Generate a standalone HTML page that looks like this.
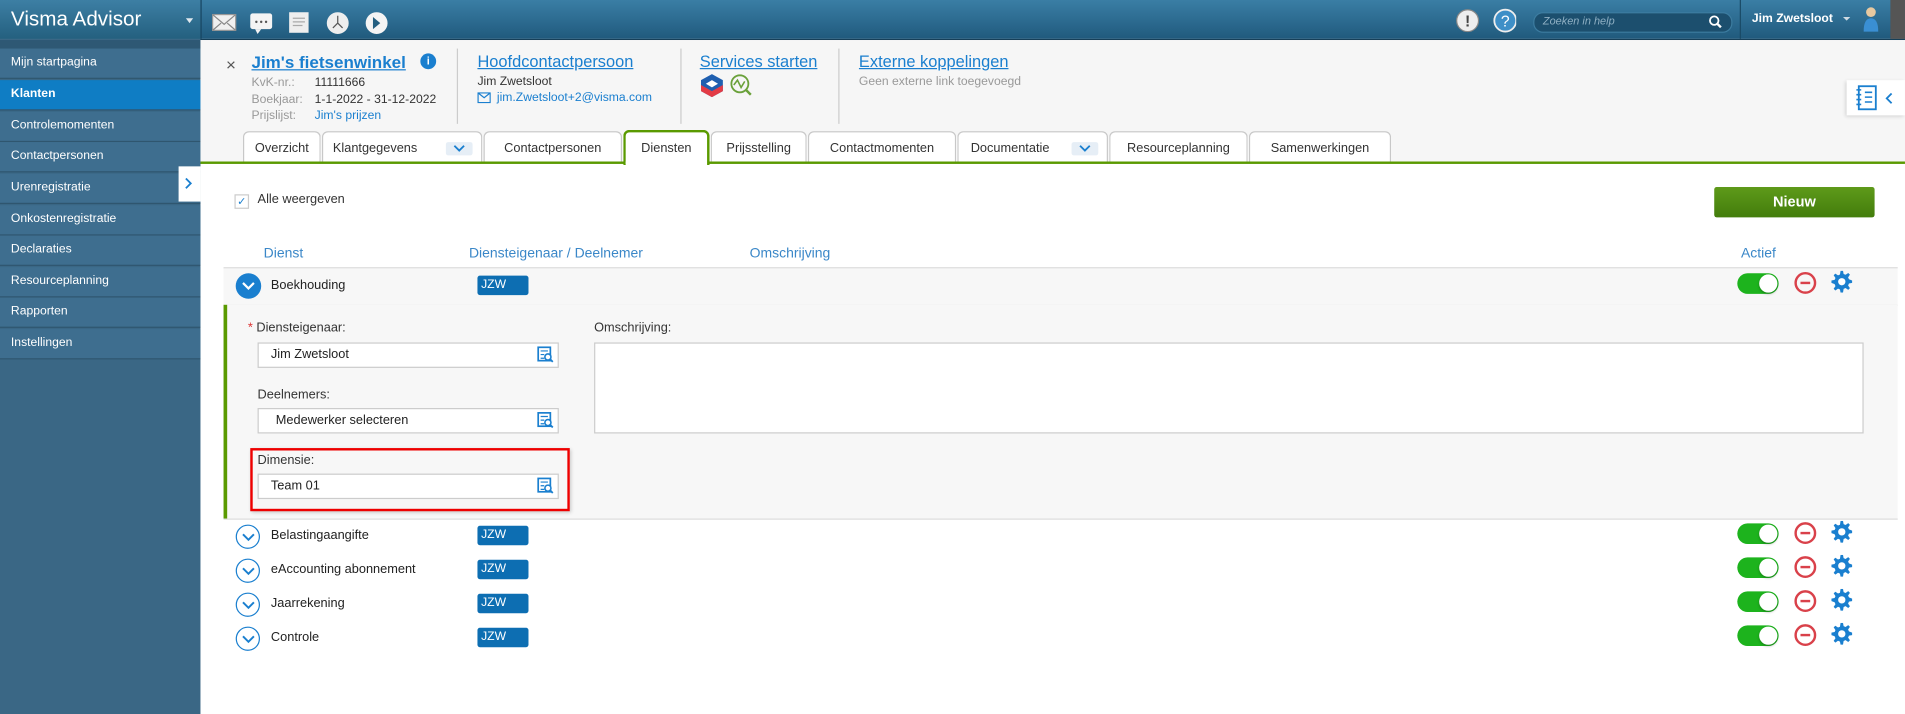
<!DOCTYPE html>
<html><head><meta charset="utf-8">
<style>
html,body{margin:0;padding:0;width:1905px;height:714px;overflow:hidden;background:#fff}
#s{position:absolute;left:0;top:0;width:1568px;height:588px;transform:scale(1.2149,1.2143);transform-origin:0 0;font-family:"Liberation Sans",sans-serif;font-size:11px;color:#222;background:#fff}
.a{position:absolute}
.top{left:0;top:0;width:1568px;height:32px;background:linear-gradient(#3a7ea5,#205a7d);border-bottom:1px solid #163f58}
.side{left:0;top:32px;width:165px;height:556px;background:#3a6785}
.nav{left:0;width:165px;height:24px;background:#3e6e8f;border-bottom:1px solid #2f566f;color:#fff;font-size:10px;line-height:24px;text-indent:9px}
.hdr{left:165px;top:33px;width:1403px;height:101px;background:#f6f6f6}
.lnk{color:#1a7fcf;text-decoration:underline}
.g{color:#999}
.sep{width:1px;background:#ccc}
.tab{top:108px;height:25px;border:1px solid #c8c8c8;border-bottom:none;border-radius:5px 5px 0 0;background:#fff;line-height:26px;text-align:center;font-size:10.5px;color:#333}
.col{top:203px;color:#3a87c8;font-size:11.5px}
.badge{width:42px;height:16px;background:#0d6eb2;border-radius:2px;color:#fff;font-size:10px;line-height:16px;text-indent:3px}
.tog{width:34px;height:17px;background:#1db31d;border-radius:9px}
.tog:after{content:"";position:absolute;right:1px;top:1px;width:15px;height:15px;border-radius:50%;background:#fff;box-shadow:0 1px 2px rgba(0,0,0,.3)}
.min{width:14px;height:14px;border:2px solid #d9414a;border-radius:50%}
.min:after{content:"";position:absolute;left:3px;top:6px;width:8px;height:2px;background:#d9414a}
.inp{width:246px;height:19px;border:1px solid #ccc;background:#fff;line-height:19px;text-indent:10px;font-size:10.5px}
.lbl{font-size:10.5px;color:#333}
.chev{width:18px;height:18px;border:1.5px solid #1a7fcf;border-radius:50%}
.txt{font-size:10.5px}
</style></head><body><div id="s">
<svg width="0" height="0" style="position:absolute"><defs><g id="gear"><path d="M9 0h2l.5 2.6 1.6.7 2.2-1.5 1.4 1.4-1.5 2.2.7 1.6L18.5 8v2l-2.6.5-.7 1.6 1.5 2.2-1.4 1.4-2.2-1.5-1.6.7L11 18h-2l-.5-2.6-1.6-.7-2.2 1.5-1.4-1.4 1.5-2.2-.7-1.6L1.5 10V8l2.6-.5.7-1.6-1.5-2.2 1.4-1.4 2.2 1.5 1.6-.7z" fill="#1a7fcf" transform="translate(-1 0)"/><circle cx="9" cy="9" r="3" fill="#fff"/></g></defs></svg>
<div class="a top"></div>
<div class="a" style="left:0;top:0;width:165px;height:32px;background:linear-gradient(#3d7fa4,#24607f);border-right:1px solid #174561"></div>
<div class="a" style="left:9px;top:6px;color:#fff;font-size:17px">Visma Advisor</div>
<div class="a" style="left:153px;top:15px;border:3px solid transparent;border-top:4px solid #dfe8ee"></div>
<svg class="a" style="left:174px;top:10px" width="150" height="20">
<rect x="1" y="2" width="19" height="13" fill="#f0f0f0" stroke="#999"/><path d="M1 2l9.5 8 9.5-8M1 15l7-6M20 15l-7-6" fill="none" stroke="#888"/>
<rect x="32" y="1" width="18" height="13" rx="2" fill="#f4f4f4"/><path d="M36 14l2 4 3-4z" fill="#f4f4f4"/><circle cx="37" cy="8" r="1" fill="#555"/><circle cx="41" cy="8" r="1" fill="#555"/><circle cx="45" cy="8" r="1" fill="#555"/>
<rect x="64" y="0" width="16" height="17" fill="#eee"/><path d="M67 5h10M67 8h10M67 11h8" stroke="#aaa"/>
<circle cx="104" cy="9" r="9" fill="#eee"/><path d="M104 3v6l4 4M104 9l-4 4" stroke="#555" fill="none"/>
<circle cx="136" cy="9" r="9" fill="#f4f4f4"/><path d="M133 4l6 5-6 5z" fill="#245f80"/>
</svg>
<svg class="a" style="left:1198px;top:7px" width="50" height="20"><circle cx="10" cy="10" r="9" fill="#eee" stroke="#888"/><text x="10" y="15" font-size="13" text-anchor="middle" fill="#444" font-family="Liberation Sans" font-weight="bold">!</text><circle cx="41" cy="10" r="9" fill="#3e8fc7" stroke="#eee" stroke-width="1.5"/><text x="41" y="15" font-size="13" text-anchor="middle" fill="#fff" font-family="Liberation Sans">?</text></svg>
<div class="a" style="left:1262px;top:10px;width:162px;height:15px;border-radius:8px;background:#1c4f6e;border:1px solid #3c7ca0"></div>
<div class="a" style="left:1270px;top:12px;color:#8fb0c4;font-size:9px;font-style:italic">Zoeken in help</div>
<svg class="a" style="left:1406px;top:12px" width="12" height="12"><circle cx="5" cy="5" r="3.5" stroke="#fff" stroke-width="1.5" fill="none"/><path d="M7.5 7.5l3 3" stroke="#fff" stroke-width="2"/></svg>
<div class="a" style="left:1432px;top:0;width:1px;height:32px;background:#1a4a66"></div>
<div class="a" style="left:1442px;top:10px;color:#fff;font-weight:bold;font-size:10px">Jim Zwetsloot</div>
<div class="a" style="left:1517px;top:14px;border:3px solid transparent;border-top:3px solid #cfdbe3"></div>
<svg class="a" style="left:1532px;top:4px" width="16" height="24"><circle cx="8" cy="6" r="4" fill="#e8c9a0"/><path d="M2 22q0-11 6-11t6 11z" fill="#3a8fd3"/></svg>
<div class="a" style="left:1556px;top:0;width:12px;height:32px;background:#555"></div>

<div class="a side"></div>
<div class="a" style="left:0;top:33px;width:165px;height:7px;background:#2e5874"></div>
<div class="a nav" style="top:40px">Mijn startpagina</div>
<div class="a nav" style="top:66px;background:#0f7dc4;font-weight:bold">Klanten</div>
<div class="a nav" style="top:92px">Controlemomenten</div>
<div class="a nav" style="top:117px">Contactpersonen</div>
<div class="a nav" style="top:143px">Urenregistratie</div>
<div class="a nav" style="top:169px">Onkostenregistratie</div>
<div class="a nav" style="top:194px">Declaraties</div>
<div class="a nav" style="top:220px">Resourceplanning</div>
<div class="a nav" style="top:245px">Rapporten</div>
<div class="a nav" style="top:271px">Instellingen</div>

<div class="a hdr"></div>
<div class="a" style="left:186px;top:45px;font-size:14px;color:#555">×</div>
<div class="a lnk" style="left:207px;top:43px;font-size:14px;font-weight:bold">Jim's fietsenwinkel</div>
<div class="a" style="left:346px;top:44px;width:13px;height:13px;border-radius:50%;background:#1a7fcf;color:#fff;font-size:9px;font-weight:bold;text-align:center;line-height:13px">i</div>
<div class="a g" style="left:207px;top:62px;font-size:10px;line-height:13.5px">KvK-nr.:<br>Boekjaar:<br>Prijslijst:</div>
<div class="a" style="left:259px;top:62px;font-size:10px;line-height:13.5px;color:#333">11111666<br>1-1-2022 - 31-12-2022<br><span style="color:#1a7fcf">Jim's prijzen</span></div>
<div class="a sep" style="left:376px;top:40px;height:62px"></div>
<div class="a lnk" style="left:393px;top:43px;font-size:13.5px">Hoofdcontactpersoon</div>
<div class="a" style="left:393px;top:62px;font-size:10px;color:#333">Jim Zwetsloot</div>
<svg class="a" style="left:393px;top:76px" width="11" height="9"><rect x=".5" y=".5" width="10" height="8" fill="none" stroke="#1a7fcf"/><path d="M.5 .5l5 4 5-4" fill="none" stroke="#1a7fcf"/></svg>
<div class="a" style="left:409px;top:75px;font-size:10px;color:#1a7fcf">jim.Zwetsloot+2@visma.com</div>
<div class="a sep" style="left:560px;top:40px;height:62px"></div>
<div class="a lnk" style="left:576px;top:43px;font-size:13.5px">Services starten</div>
<svg class="a" style="left:576px;top:60px" width="48" height="20"><path d="M10 1l9 5v9l-9 5-9-5V6z" fill="#1f5fb0"/><path d="M1 10l9 5 9-5v5l-9 5-9-5z" fill="#e33b45"/><path d="M10 6l5 3-5 3-5-3z" fill="#fff"/><circle cx="33" cy="9" r="7" fill="none" stroke="#6aa13a" stroke-width="1.5"/><path d="M28 10l3-4 3 6 3-5" fill="none" stroke="#6aa13a" stroke-width="1.3"/><path d="M38 14l4 4" stroke="#6aa13a" stroke-width="2"/></svg>
<div class="a sep" style="left:690px;top:40px;height:62px"></div>
<div class="a lnk" style="left:707px;top:43px;font-size:13.5px">Externe koppelingen</div>
<div class="a g" style="left:707px;top:62px;font-size:10px">Geen externe link toegevoegd</div>
<div class="a" style="left:1520px;top:66px;width:48px;height:29px;background:#fff;box-shadow:-1px 1px 3px rgba(0,0,0,.15)"></div>
<svg class="a" style="left:1527px;top:70px" width="38" height="22"><rect x="3" y="1" width="14" height="19" fill="none" stroke="#1a7fcf" stroke-width="1.5"/><path d="M1 4h4M1 8h4M1 12h4M1 16h4M8 6h6M8 10h6M8 14h6" stroke="#1a7fcf" stroke-width="1.3"/><path d="M30 7l-4 4 4 4" fill="none" stroke="#1a7fcf" stroke-width="1.5"/></svg>

<div class="a tab" style="left:200px;width:62px">Overzicht</div>
<div class="a tab" style="left:265px;width:130px;text-align:left;text-indent:8px">Klantgegevens</div>
<div class="a" style="left:367px;top:117px;width:22px;height:11px;background:#e6eef6;border-radius:2px"></div>
<svg class="a" style="left:373px;top:119px" width="10" height="7"><path d="M1 1l4 4 4-4" fill="none" stroke="#1a7fcf" stroke-width="1.5"/></svg>
<div class="a tab" style="left:398px;width:112px">Contactpersonen</div>
<div class="a tab" style="left:513px;width:67px;border:2px solid #5a9a00;border-bottom:none;height:27px;top:107px;z-index:2">Diensten</div>
<div class="a tab" style="left:585px;width:77px">Prijsstelling</div>
<div class="a tab" style="left:665px;width:120px">Contactmomenten</div>
<div class="a tab" style="left:788px;width:122px;text-align:left;text-indent:10px">Documentatie</div>
<div class="a" style="left:882px;top:117px;width:22px;height:11px;background:#e6eef6;border-radius:2px"></div>
<svg class="a" style="left:888px;top:119px" width="10" height="7"><path d="M1 1l4 4 4-4" fill="none" stroke="#1a7fcf" stroke-width="1.5"/></svg>
<div class="a tab" style="left:913px;width:112px">Resourceplanning</div>
<div class="a tab" style="left:1028px;width:115px">Samenwerkingen</div>
<div class="a" style="left:165px;top:133px;width:1403px;height:2px;background:#5a9a00"></div>
<div class="a" style="left:515px;top:133px;width:65px;height:2px;background:#fff;z-index:3"></div>

<div class="a" style="left:147px;top:137px;width:18px;height:29px;background:#fff"></div>
<svg class="a" style="left:151px;top:146px" width="8" height="10"><path d="M2 1l4 4-4 4" fill="none" stroke="#1a7fcf" stroke-width="1.5"/></svg>

<div class="a" style="left:193px;top:160px;width:10px;height:10px;border:1px solid #ccc;background:#fff;color:#1a7fcf;font-size:9px;line-height:10px;text-align:center">✓</div>
<div class="a" style="left:212px;top:158px;font-size:10.5px;color:#333">Alle weergeven</div>
<div class="a" style="left:1411px;top:154px;width:132px;height:25px;background:linear-gradient(#5e9a1a,#437d0c);border-radius:2px;color:#fff;font-size:12px;text-align:center;line-height:25px;font-weight:bold">Nieuw</div>

<div class="a col" style="left:217px">Dienst</div>
<div class="a col" style="left:386px">Diensteigenaar / Deelnemer</div>
<div class="a col" style="left:617px">Omschrijving</div>
<div class="a col" style="left:1433px">Actief</div>

<div class="a" style="left:184px;top:220px;width:1378px;height:30px;background:#f7f7f7;border-top:1px solid #ddd;border-bottom:1px solid #ddd"></div>
<div class="a" style="left:194px;top:225px;width:21px;height:21px;border-radius:50%;background:#1a7fcf"></div>
<svg class="a" style="left:199px;top:232px" width="11" height="8"><path d="M1 1l4.5 4.5L10 1" fill="none" stroke="#fff" stroke-width="1.8"/></svg>
<div class="a txt" style="left:223px;top:229px">Boekhouding</div>
<div class="a badge" style="left:393px;top:227px">JZW</div>
<div class="a tog" style="left:1430px;top:225px"></div>
<div class="a min" style="left:1477px;top:224px"></div>
<svg class="a" style="left:1507px;top:223px" width="18" height="18"><use href="#gear"/></svg>

<div class="a" style="left:184px;top:251px;width:1378px;height:176px;background:#f7f7f7;border-bottom:1px solid #ddd"></div>
<div class="a" style="left:184px;top:251px;width:3px;height:176px;background:#5a9a00"></div>
<div class="a lbl" style="left:204px;top:264px"><span style="color:#d33">*</span> Diensteigenaar:</div>
<div class="a inp" style="left:212px;top:282px">Jim Zwetsloot</div>
<div class="a lbl" style="left:212px;top:319px">Deelnemers:</div>
<div class="a inp" style="left:212px;top:336px;text-indent:14px">Medewerker selecteren</div>
<div class="a" style="left:206px;top:369px;width:259px;height:48px;border:2px solid #e00;box-shadow:1px 1px 3px rgba(0,0,0,.2)"></div>
<div class="a lbl" style="left:212px;top:373px">Dimensie:</div>
<div class="a inp" style="left:212px;top:390px">Team 01</div>
<svg class="a" style="left:442px;top:285px" width="14" height="130"><g id="ic"><rect x="1" y="1" width="10" height="11" fill="none" stroke="#1a7fcf" stroke-width="1.4"/><path d="M3 4h6M3 7h3M3 10h3" stroke="#1a7fcf"/><circle cx="9" cy="9" r="2.5" fill="#fff" stroke="#1a7fcf" stroke-width="1.3"/><path d="M11 11l2 2" stroke="#1a7fcf" stroke-width="1.5"/></g><use href="#ic" y="54"/><use href="#ic" y="108"/></svg>
<div class="a lbl" style="left:489px;top:264px">Omschrijving:</div>
<div class="a" style="left:489px;top:282px;width:1043px;height:73px;border:1px solid #ccc;background:#fff"></div>

<div class="a chev" style="left:194px;top:432px"></div><svg class="a" style="left:199px;top:439px" width="11" height="8"><path d="M1 1l4.5 4.5L10 1" fill="none" stroke="#1a7fcf" stroke-width="1.6"/></svg>
<div class="a txt" style="left:223px;top:435px">Belastingaangifte</div><div class="a badge" style="left:393px;top:433px">JZW</div>
<div class="a tog" style="left:1430px;top:431px"></div><div class="a min" style="left:1477px;top:430px"></div><svg class="a" style="left:1507px;top:429px" width="18" height="18"><use href="#gear"/></svg>

<div class="a chev" style="left:194px;top:460px"></div><svg class="a" style="left:199px;top:467px" width="11" height="8"><path d="M1 1l4.5 4.5L10 1" fill="none" stroke="#1a7fcf" stroke-width="1.6"/></svg>
<div class="a txt" style="left:223px;top:463px">eAccounting abonnement</div><div class="a badge" style="left:393px;top:461px">JZW</div>
<div class="a tog" style="left:1430px;top:459px"></div><div class="a min" style="left:1477px;top:458px"></div><svg class="a" style="left:1507px;top:457px" width="18" height="18"><use href="#gear"/></svg>

<div class="a chev" style="left:194px;top:488px"></div><svg class="a" style="left:199px;top:495px" width="11" height="8"><path d="M1 1l4.5 4.5L10 1" fill="none" stroke="#1a7fcf" stroke-width="1.6"/></svg>
<div class="a txt" style="left:223px;top:491px">Jaarrekening</div><div class="a badge" style="left:393px;top:489px">JZW</div>
<div class="a tog" style="left:1430px;top:487px"></div><div class="a min" style="left:1477px;top:486px"></div><svg class="a" style="left:1507px;top:485px" width="18" height="18"><use href="#gear"/></svg>

<div class="a chev" style="left:194px;top:516px"></div><svg class="a" style="left:199px;top:523px" width="11" height="8"><path d="M1 1l4.5 4.5L10 1" fill="none" stroke="#1a7fcf" stroke-width="1.6"/></svg>
<div class="a txt" style="left:223px;top:519px">Controle</div><div class="a badge" style="left:393px;top:517px">JZW</div>
<div class="a tog" style="left:1430px;top:515px"></div><div class="a min" style="left:1477px;top:514px"></div><svg class="a" style="left:1507px;top:513px" width="18" height="18"><use href="#gear"/></svg>
</div></body></html>
